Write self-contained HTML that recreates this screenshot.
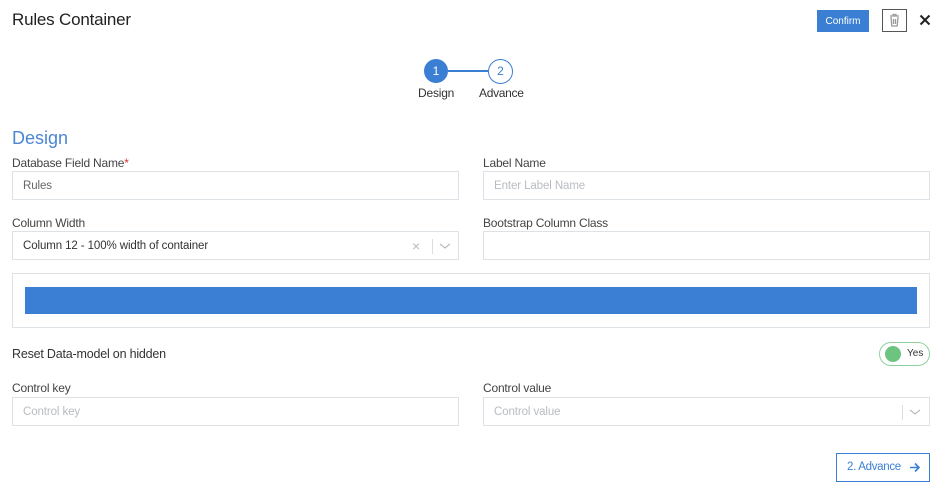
<!DOCTYPE html>
<html><head><style>
*{box-sizing:border-box;margin:0;padding:0}
body{width:942px;height:491px;background:#fff;font-family:"Liberation Sans",sans-serif;color:#333;position:relative;overflow:hidden}
.a{position:absolute}
.lbl{font-size:12px;color:#444;letter-spacing:-0.2px}
.inp{border:1px solid #dde2e6;height:29px;font-size:11.5px;padding:0 10px;line-height:29px;letter-spacing:-0.1px}
.ph{color:#b8bcc2}
</style></head><body>
<div class="a" style="left:12px;top:10px;font-size:17px;color:#222;letter-spacing:-0.2px">Rules Container</div>
<div class="a" style="left:817px;top:10px;width:52px;height:22px;background:#3a7fd4;color:#fff;font-size:10px;display:flex;align-items:center;justify-content:center">Confirm</div>
<div class="a" style="left:882px;top:9px;width:25px;height:23px;border:1px solid #555">
<svg width="23" height="21" viewBox="0 0 23 21"><g fill="none" stroke="#999" stroke-width="1.3"><path d="M7 6h9M10 6V4.5h3V6M8 7l.8 9h5.4L15 7M10.5 9v5M12.5 9v5"/></g></svg></div>
<svg class="a" style="left:919px;top:14px" width="12" height="12"><path d="M1.5 1.5l9 9M10.5 1.5l-9 9" stroke="#222" stroke-width="2"/></svg>
<div class="a" style="left:448px;top:70px;width:40px;height:2px;background:#3a7fd4"></div>
<div class="a" style="left:424px;top:59px;width:24px;height:24px;border-radius:50%;background:#3a7fd4;color:#fff;font-size:12px;text-align:center;line-height:24px">1</div>
<div class="a" style="left:488px;top:59px;width:25px;height:25px;border-radius:50%;border:1.5px solid #3a7fd4;color:#3a7fd4;font-size:12px;text-align:center;line-height:22px;background:#fff">2</div>
<div class="a" style="left:418px;top:86px;font-size:12px;color:#333;letter-spacing:-0.2px">Design</div>
<div class="a" style="left:479px;top:86px;font-size:12px;color:#333;letter-spacing:-0.3px">Advance</div>
<div class="a" style="left:12px;top:128px;font-size:18px;color:#4a86d4">Design</div>
<div class="a lbl" style="left:12px;top:156px">Database Field Name<span style="color:#d33">*</span></div>
<div class="a inp" style="left:12px;top:171px;width:447px;color:#666">Rules</div>
<div class="a lbl" style="left:483px;top:156px">Label Name</div>
<div class="a inp ph" style="left:483px;top:171px;width:447px">Enter Label Name</div>
<div class="a lbl" style="left:12px;top:216px">Column Width</div>
<div class="a inp" style="left:12px;top:231px;width:447px;color:#333">Column 12 - 100% width of container
<span class="a" style="left:399px;top:0;color:#bbb;font-size:14px">×</span>
<span class="a" style="left:419px;top:7px;width:1px;height:15px;background:#ddd"></span>
<svg class="a" style="left:426px;top:9px" width="12" height="10"><path d="M1 3l5 4 5-4" fill="none" stroke="#bbb" stroke-width="1.2"/></svg></div>
<div class="a lbl" style="left:483px;top:216px">Bootstrap Column Class</div>
<div class="a inp" style="left:483px;top:231px;width:447px"></div>
<div class="a" style="left:12px;top:273px;width:918px;height:55px;border:1px solid #dde2e6"></div>
<div class="a" style="left:25px;top:287px;width:892px;height:27px;background:#3a7fd4"></div>
<div class="a" style="left:12px;top:347px;font-size:12.5px;color:#333;letter-spacing:-0.2px">Reset Data-model on hidden</div>
<div class="a" style="left:879px;top:342px;width:51px;height:24px;border:1px solid #8fd19e;border-radius:12px">
<div class="a" style="left:5px;top:3px;width:16px;height:16px;border-radius:50%;background:#6cc47f"></div>
<span class="a" style="left:27px;top:5px;font-size:10px;color:#333">Yes</span></div>
<div class="a lbl" style="left:12px;top:381px">Control key</div>
<div class="a inp ph" style="left:12px;top:397px;width:447px">Control key</div>
<div class="a lbl" style="left:483px;top:381px">Control value</div>
<div class="a inp ph" style="left:483px;top:397px;width:447px">Control value
<span class="a" style="left:418px;top:7px;width:1px;height:15px;background:#ddd"></span>
<svg class="a" style="left:425px;top:9px" width="12" height="10"><path d="M1 3l5 4 5-4" fill="none" stroke="#bbb" stroke-width="1.2"/></svg></div>
<div class="a" style="left:836px;top:453px;width:94px;height:29px;border:1px solid #3a7fd4;color:#3a7fd4;font-size:11.5px;line-height:27px;padding-left:10px;letter-spacing:-0.3px">2. Advance
<svg class="a" style="left:72px;top:8px" width="12" height="11"><path d="M1 5.5h9M6 1.5l4 4-4 4" fill="none" stroke="#3a7fd4" stroke-width="1.6"/></svg></div>
</body></html>
